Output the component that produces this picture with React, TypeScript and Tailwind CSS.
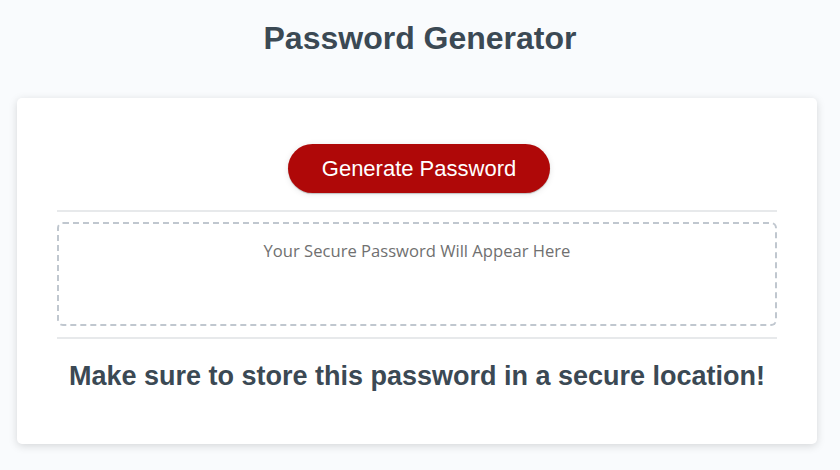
const App = () => {
  return (
    <div className="min-h-[470px] w-full bg-[#f9fbfd] font-['Liberation_Sans',Arial,sans-serif] text-[#3b4954]">
      <header className="pt-[18px] text-center">
        <h1 className="text-[32px] font-bold leading-[40px]">Password Generator</h1>
      </header>
      <div className="ml-[17px] mt-[40px] w-[800px] rounded-[5px] bg-white px-10 pt-[46px] pb-[51px] shadow-[0_2px_8px_0_rgba(0,0,0,0.15)]">
        <div className="flex justify-center">
          <button className="ml-[4px] h-[49px] w-[262px] rounded-full bg-[#af0808] text-[22px] leading-[22px] text-white shadow-[0_1px_6px_0_rgba(0,0,0,0.1),0_1px_1px_0_rgba(0,0,0,0.2)]">
            Generate Password
          </button>
        </div>
        <div className="mt-[17px] h-[2px] w-full bg-[#e7e9eb]"></div>
        <div className="mt-[10px] h-[104px] w-full rounded-[6px] border-2 border-dashed border-[#c0c7cf] pt-[15px] text-center font-['Open_Sans',sans-serif] text-[16.6px] leading-[24px] text-[#707070]">
          Your Secure Password Will Appear Here
        </div>
        <div className="mt-[11px] h-[2px] w-full bg-[#e7e9eb]"></div>
        <p className="mt-[20px] text-center text-[27px] font-bold leading-[34px]">
          Make sure to store this password in a secure location!
        </p>
      </div>
    </div>
  );
};

export default App;
